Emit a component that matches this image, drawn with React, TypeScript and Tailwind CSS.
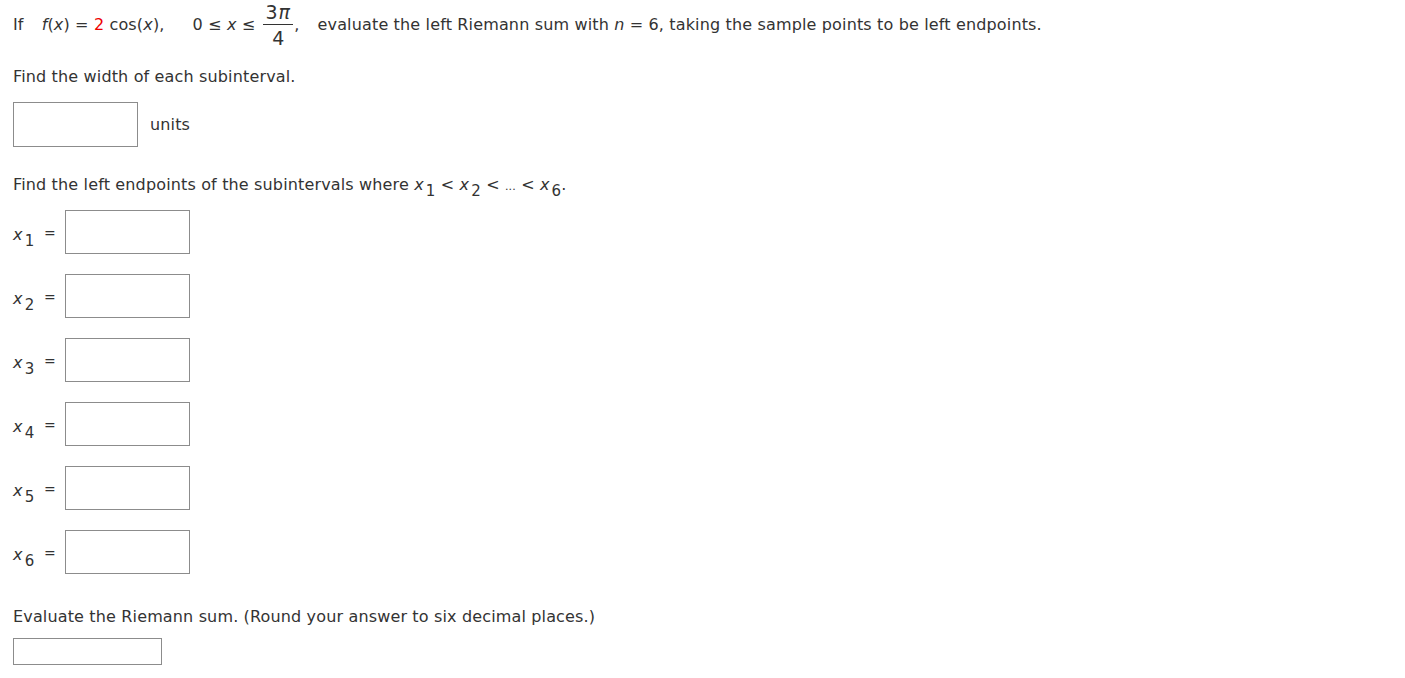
const Sub = ({ n }: { n: number }) => (
  <sub className="not-italic text-[15px] relative top-[6px] align-baseline leading-none ml-[2px]">{n}</sub>
);

const Row = ({ i }: { i: number }) => (
  <div className="flex items-center h-[44px]">
    <span className="w-[31px] italic leading-none relative top-[3px]">
      x<Sub n={i} />
    </span>
    <span className="w-[21px] text-[14px] relative top-[1px]">=</span>
    <div className="w-[125px] h-[44px] border border-[#8c8c8c]" />
  </div>
);

export default function App() {
  return (
    <div className="pl-[13px] text-[16px] tracking-[0.15px] text-[#333] font-['Verdana','DejaVu_Sans',sans-serif] bg-white min-h-[678px]">
      <div className="flex items-center h-[48px] pt-[2px]">
        <span>If</span>
        <span className="ml-[18px]">
          <i>f</i>(<i>x</i>) = <span className="text-[#e00]">2</span> cos(<i>x</i>),
        </span>
        <span className="ml-[28px]">
          0 ≤ <i>x</i> ≤
        </span>
        <span className="inline-flex flex-col items-center ml-[8px] -mt-[1px]">
          <span className="text-[19px] leading-[23px] tracking-[1px]">
            3<i>π</i>
          </span>
          <span className="border-t border-[#333] w-[30px]" />
          <span className="text-[19px] leading-[20px] pt-[3px]">4</span>
        </span>
        <span className="ml-[1px]">,</span>
        <span className="ml-[18px]">
          evaluate the left Riemann sum with <i>n</i> = 6, taking the sample points to be left endpoints.
        </span>
      </div>

      <p className="mt-[20px] leading-[18px] h-[18px]">Find the width of each subinterval.</p>

      <div className="flex items-center gap-[12px] mt-[16px]">
        <div className="w-[125px] h-[45px] border border-[#8c8c8c]" />
        <span>units</span>
      </div>

      <p className="mt-[29px] leading-[18px] h-[18px]">
        Find the left endpoints of the subintervals where <i>x</i>
        <Sub n={1} /> &lt; <i>x</i>
        <Sub n={2} /> &lt; <span className="text-[11px]">...</span> &lt; <i>x</i>
        <Sub n={6} />.
      </p>

      <div className="flex flex-col gap-[20px] mt-[16px]">
        {[1, 2, 3, 4, 5, 6].map((i) => (
          <Row key={i} i={i} />
        ))}
      </div>

      <p className="mt-[34px] leading-[18px] h-[18px]">
        Evaluate the Riemann sum. (Round your answer to six decimal places.)
      </p>

      <div className="mt-[12px] w-[149px] h-[27px] border border-[#8c8c8c]" />
    </div>
  );
}
